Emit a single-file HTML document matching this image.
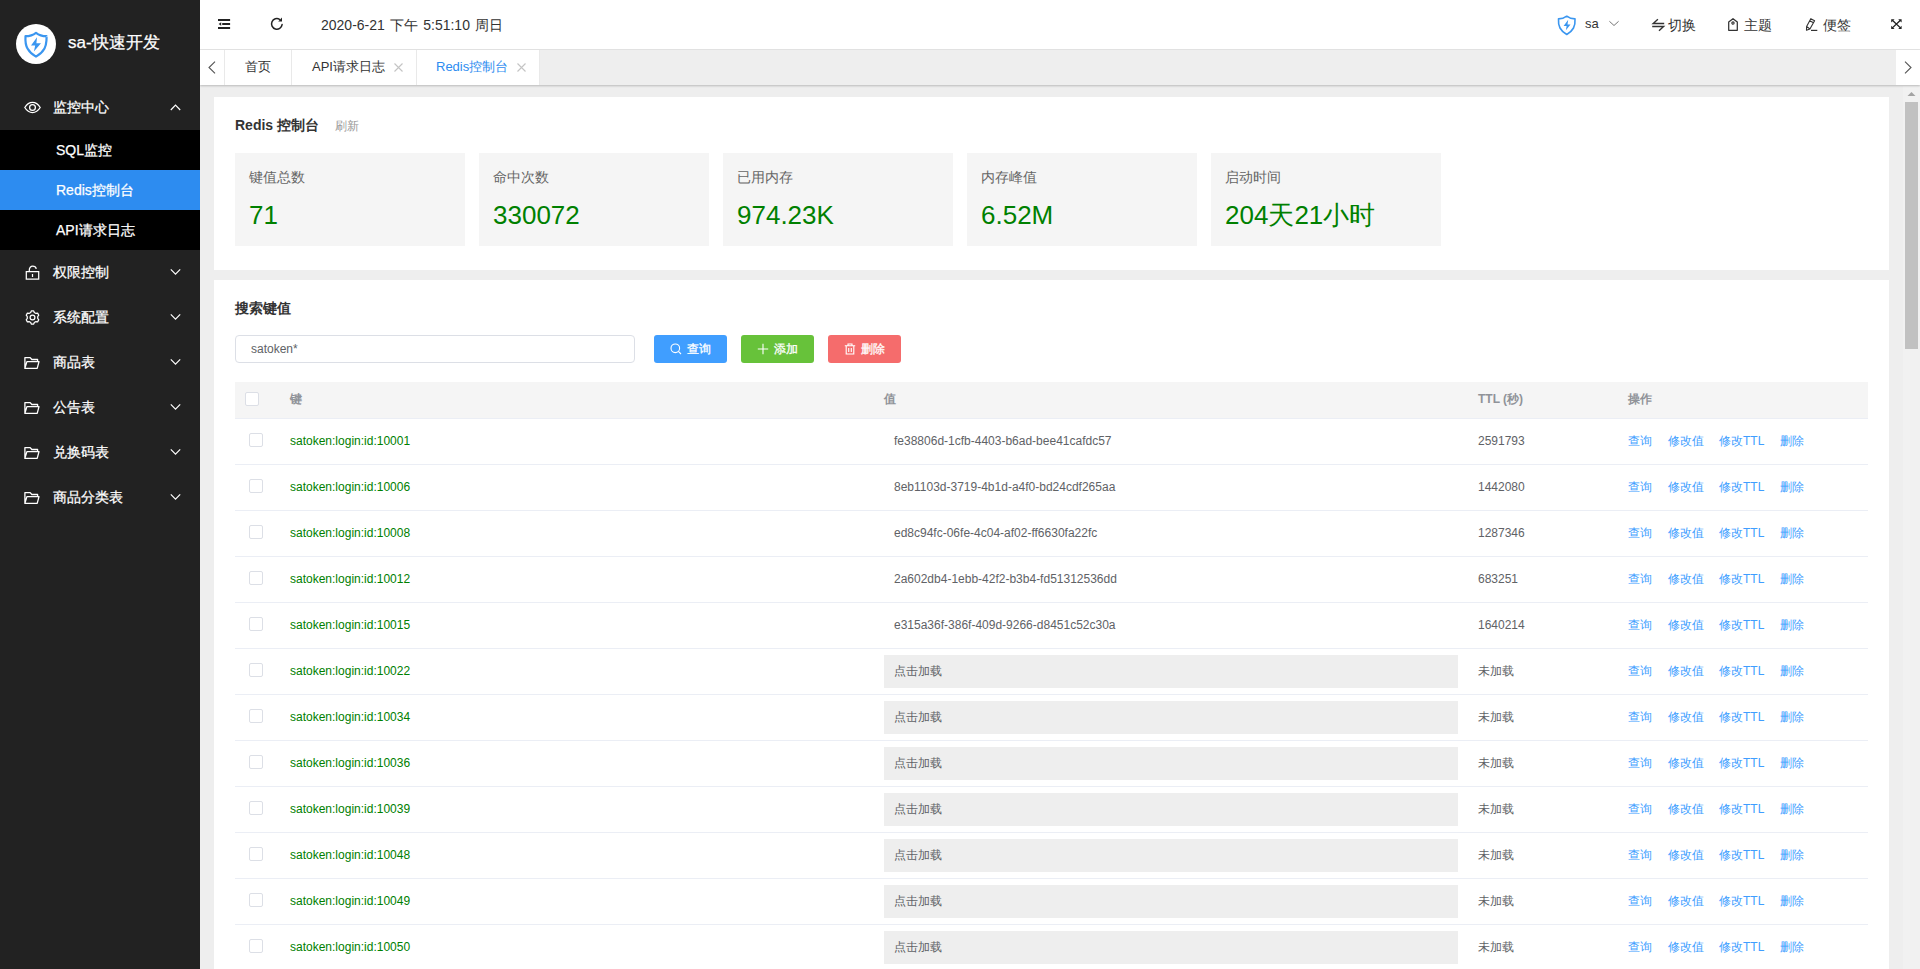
<!DOCTYPE html>
<html lang="zh"><head><meta charset="utf-8"><title>sa-快速开发</title>
<style>
*{box-sizing:border-box;margin:0;padding:0}
html,body{width:1920px;height:969px;overflow:hidden;background:#eee;font-family:"Liberation Sans",sans-serif;font-size:14px;color:#333}
#pg{position:relative;width:1920px;height:969px;overflow:hidden}
#pg *{position:absolute;white-space:nowrap}
svg{overflow:visible}
#side{left:0;top:0;width:200px;height:969px;background:#222;-webkit-text-stroke:.25px #fff}
#logo{left:16px;top:24px;width:40px;height:40px;border-radius:50%;background:#fff}
#title{left:68px;top:31px;font-size:17px;color:#fff;line-height:24px}
.mi{left:0;width:200px;height:45px;color:#fff;font-size:14px;line-height:45px}
.mi span{left:53px;top:0}
.mi svg.ic{left:24px;top:14px;width:17px;height:17px}
.mi svg.ar{left:170px;top:17px;width:11px;height:11px}
#sub{left:0;top:130px;width:200px;height:120px;background:#000}
.si{left:0;width:200px;height:40px;line-height:40px;color:#fff;font-size:14px}
.si span{left:56px;top:0}
#hdr{left:200px;top:0;width:1720px;height:50px;background:#fff;border-bottom:1px solid #e5e5e5}
#hdr .tx{font-size:14px;color:#333;line-height:20px;top:15px}
#tabs{left:200px;top:50px;width:1720px;height:35px;background:#eee;box-shadow:0 1px 2px rgba(0,0,0,.22)}
.tab{top:0;height:35px;background:#fff;border-right:1px solid #e9e9e9;font-size:13px;line-height:35px;color:#333}
#p1{left:214px;top:97px;width:1675px;height:173px;background:#fff}
#p2{left:214px;top:280px;width:1675px;height:700px;background:#fff}
.card{top:153px;width:230px;height:93px;background:#f5f5f5}
.card b{left:14px;top:14px;font-weight:normal;font-size:14px;color:#666;line-height:20px}
.card em{left:14px;top:45px;font-style:normal;font-size:26px;color:#008000;line-height:34px}
#th{left:235px;top:382px;width:1633px;height:37px;background:#f5f5f5;border-bottom:1px solid #ebeef5}
.thc{top:381px;font-size:12px;font-weight:bold;color:#909399;line-height:36px}
.cb{width:14px;height:14px;border:1px solid #dcdfe6;border-radius:2px;background:#fff}
.tr{left:0;width:1920px;height:46px;font-size:12px;color:#606266;line-height:45px}
.tr:after{content:"";position:absolute;left:235px;top:45px;width:1633px;height:1px;background:#ebeef5}
.tr .cb{left:249px;top:14px}
.tr .k{left:290px;color:#008000}
.tr .v{left:894px}
.tr .t{left:1478px}
.tr a{color:#409eff}
.tr .ld{left:884px;top:6px;width:574px;height:33px;background:#eee;line-height:33px;padding-left:10px}
.btn{top:335px;height:28px;border-radius:3px;color:#fff;font-size:12px;line-height:28px}
.tab span{top:-1px}
.btn span{-webkit-text-stroke:.3px #fff}

</style></head><body><div id="pg">
<!-- main -->
<div id="p1"></div><div id="p2"></div>
<div class="hd" style="left:235px;top:115px;font-size:14px;font-weight:bold;color:#333;line-height:20px">Redis 控制台</div>
<div style="left:335px;top:116px;font-size:12px;color:#999;line-height:20px">刷新</div>
<div class="card" style="left:235px"><b>键值总数</b><em>71</em></div>
<div class="card" style="left:479px"><b>命中次数</b><em>330072</em></div>
<div class="card" style="left:723px"><b>已用内存</b><em>974.23K</em></div>
<div class="card" style="left:967px"><b>内存峰值</b><em>6.52M</em></div>
<div class="card" style="left:1211px"><b>启动时间</b><em>204天21小时</em></div>
<div class="hd" style="left:235px;top:298px;font-size:14px;font-weight:bold;color:#333;line-height:20px">搜索键值</div>
<div id="inp" style="left:235px;top:335px;width:400px;height:28px;border:1px solid #dcdfe6;border-radius:4px;background:#fff"><span style="left:15px;top:0;font-size:12px;line-height:26px;color:#606266">satoken*</span></div>
<div class="btn" style="left:654px;width:73px;background:#409eff"><svg style="left:16px;top:8px;width:12px;height:12px" viewBox="0 0 12 12"><circle cx="5.3" cy="5.3" r="4.3" fill="none" stroke="#fff" stroke-width="1.1"/><path d="M8.4 8.4L11 11" stroke="#fff" stroke-width="1.1" fill="none"/></svg><span style="left:33px;top:0">查询</span></div>
<div class="btn" style="left:741px;width:73px;background:#67c23a"><svg style="left:16px;top:8px;width:12px;height:12px" viewBox="0 0 12 12"><path d="M6 0.8V11.2M0.8 6H11.2" stroke="#fff" stroke-width="1.1" fill="none"/></svg><span style="left:33px;top:0">添加</span></div>
<div class="btn" style="left:828px;width:73px;background:#f56c6c"><svg style="left:16px;top:8px;width:12px;height:12px" viewBox="0 0 12 12"><path d="M0.8 2.8H11.2M4 2.6V1H8V2.6M2.2 3V11H9.8V3M4.7 5V9M7.3 5V9" stroke="#fff" stroke-width="1.1" fill="none"/></svg><span style="left:33px;top:0">删除</span></div>
<div id="th"></div>
<i class="cb" style="left:245px;top:392px"></i>
<div class="thc" style="left:290px">键</div>
<div class="thc" style="left:884px">值</div>
<div class="thc" style="left:1478px">TTL (秒)</div>
<div class="thc" style="left:1628px">操作</div>
<div class="tr" style="top:419px"><i class="cb"></i><span class="k">satoken:login:id:10001</span><span class="v">fe38806d-1cfb-4403-b6ad-bee41cafdc57</span><span class="t">2591793</span><a style="left:1628px">查询</a><a style="left:1668px">修改值</a><a style="left:1719px">修改TTL</a><a style="left:1780px">删除</a></div>
<div class="tr" style="top:465px"><i class="cb"></i><span class="k">satoken:login:id:10006</span><span class="v">8eb1103d-3719-4b1d-a4f0-bd24cdf265aa</span><span class="t">1442080</span><a style="left:1628px">查询</a><a style="left:1668px">修改值</a><a style="left:1719px">修改TTL</a><a style="left:1780px">删除</a></div>
<div class="tr" style="top:511px"><i class="cb"></i><span class="k">satoken:login:id:10008</span><span class="v">ed8c94fc-06fe-4c04-af02-ff6630fa22fc</span><span class="t">1287346</span><a style="left:1628px">查询</a><a style="left:1668px">修改值</a><a style="left:1719px">修改TTL</a><a style="left:1780px">删除</a></div>
<div class="tr" style="top:557px"><i class="cb"></i><span class="k">satoken:login:id:10012</span><span class="v">2a602db4-1ebb-42f2-b3b4-fd51312536dd</span><span class="t">683251</span><a style="left:1628px">查询</a><a style="left:1668px">修改值</a><a style="left:1719px">修改TTL</a><a style="left:1780px">删除</a></div>
<div class="tr" style="top:603px"><i class="cb"></i><span class="k">satoken:login:id:10015</span><span class="v">e315a36f-386f-409d-9266-d8451c52c30a</span><span class="t">1640214</span><a style="left:1628px">查询</a><a style="left:1668px">修改值</a><a style="left:1719px">修改TTL</a><a style="left:1780px">删除</a></div>
<div class="tr" style="top:649px"><i class="cb"></i><span class="k">satoken:login:id:10022</span><span class="ld">点击加载</span><span class="t">未加载</span><a style="left:1628px">查询</a><a style="left:1668px">修改值</a><a style="left:1719px">修改TTL</a><a style="left:1780px">删除</a></div>
<div class="tr" style="top:695px"><i class="cb"></i><span class="k">satoken:login:id:10034</span><span class="ld">点击加载</span><span class="t">未加载</span><a style="left:1628px">查询</a><a style="left:1668px">修改值</a><a style="left:1719px">修改TTL</a><a style="left:1780px">删除</a></div>
<div class="tr" style="top:741px"><i class="cb"></i><span class="k">satoken:login:id:10036</span><span class="ld">点击加载</span><span class="t">未加载</span><a style="left:1628px">查询</a><a style="left:1668px">修改值</a><a style="left:1719px">修改TTL</a><a style="left:1780px">删除</a></div>
<div class="tr" style="top:787px"><i class="cb"></i><span class="k">satoken:login:id:10039</span><span class="ld">点击加载</span><span class="t">未加载</span><a style="left:1628px">查询</a><a style="left:1668px">修改值</a><a style="left:1719px">修改TTL</a><a style="left:1780px">删除</a></div>
<div class="tr" style="top:833px"><i class="cb"></i><span class="k">satoken:login:id:10048</span><span class="ld">点击加载</span><span class="t">未加载</span><a style="left:1628px">查询</a><a style="left:1668px">修改值</a><a style="left:1719px">修改TTL</a><a style="left:1780px">删除</a></div>
<div class="tr" style="top:879px"><i class="cb"></i><span class="k">satoken:login:id:10049</span><span class="ld">点击加载</span><span class="t">未加载</span><a style="left:1628px">查询</a><a style="left:1668px">修改值</a><a style="left:1719px">修改TTL</a><a style="left:1780px">删除</a></div>
<div class="tr" style="top:925px"><i class="cb"></i><span class="k">satoken:login:id:10050</span><span class="ld">点击加载</span><span class="t">未加载</span><a style="left:1628px">查询</a><a style="left:1668px">修改值</a><a style="left:1719px">修改TTL</a><a style="left:1780px">删除</a></div>
<!-- scrollbar -->
<div style="left:1903px;top:86px;width:17px;height:883px;background:#f1f1f1"></div>
<div style="left:1905px;top:102px;width:13px;height:247px;background:#c1c1c1"></div>
<svg style="left:1903px;top:86px;width:17px;height:17px" viewBox="0 0 17 17"><path d="M8.5 6L12.5 10H4.5Z" fill="#a3a3a3"/></svg>
<!-- header -->
<div id="hdr">
<svg style="left:18px;top:18px;width:13px;height:12px" viewBox="0 0 13 12"><path d="M0 1h12.1v2H0zM0 9h12.1v2H0zM4.2 5h7.9v2h-7.9zM0.6 6L3.2 4.2V7.8Z" fill="#222"/></svg>
<svg style="left:69px;top:16px;width:16px;height:16px" viewBox="0 0 16 16"><path d="M13.1 8.6A5.3 5.3 0 1 1 10.6 3.3" fill="none" stroke="#222" stroke-width="1.5" stroke-linecap="round"/><path d="M13 1.6V5.4H9.2Z" fill="#222"/></svg>
<span class="tx" style="left:121px;word-spacing:1.3px">2020-6-21 下午 5:51:10 周日</span>
<svg style="left:1357px;top:15px;width:20px;height:21px" viewBox="0 0 20 21"><path d="M9.75 1.2C7.6 2.9 4.6 3.9 1.5 3.9C1.5 3.9 1.1 9.6 3 13C4.6 15.9 7.4 18.2 9.75 19.5C12.1 18.2 14.9 15.9 16.5 13C18.4 9.6 18 3.9 18 3.9C14.9 3.9 11.9 2.9 9.75 1.2Z" fill="none" stroke="#3a96f0" stroke-width="1.6" stroke-linejoin="round"/><path d="M11.2 4.8L6.6 10.9H9.6L8.9 15.2L13.5 9.5H10.5Z" fill="#3a96f0"/></svg>
<span class="tx" style="left:1385px;top:14px;font-size:13px">sa</span>
<svg style="left:1409px;top:21px;width:10px;height:5px" viewBox="0 0 10 5"><path d="M0.4 0.3L5 4.5L9.6 0.3" fill="none" stroke="#777" stroke-width="1"/></svg>
<svg style="left:1452px;top:19px;width:13px;height:12px" viewBox="0 0 13 12"><path d="M5.9 0.3L1.2 4.5H12.2M0.2 7.5H11.6L7 11.7" fill="none" stroke="#333" stroke-width="1.4"/></svg>
<span class="tx" style="left:1468px">切换</span>
<svg style="left:1528.2px;top:18px;width:10px;height:13px" viewBox="0 0 10 13"><path d="M0.7 12.3V4.1L5 0.7L9.3 4.1V12.3Z" fill="none" stroke="#333" stroke-width="1.25" stroke-linejoin="round"/><circle cx="5" cy="5" r="1.15" fill="none" stroke="#333" stroke-width="1.1"/></svg>
<span class="tx" style="left:1544px">主题</span>
<svg style="left:1605px;top:18px;width:13px;height:13px" viewBox="0 0 13 13"><path d="M5.8 0.7L9.6 2.8L4.9 11L1.5 12.3L1.6 8.4ZM1.6 8.4L4.9 11M4.7 2.7L8.5 4.8" fill="none" stroke="#333" stroke-width="1.1" stroke-linejoin="round"/><path d="M6 12.4H12.3" stroke="#333" stroke-width="1.2"/></svg>
<span class="tx" style="left:1623px">便签</span>
<svg style="left:1690.5px;top:18.9px;width:10.8px;height:10.2px" viewBox="0 0 12 12" preserveAspectRatio="none"><path d="M1.5 1.5L10.5 10.5M10.5 1.5L1.5 10.5" stroke="#222" stroke-width="1.5" fill="none"/><path d="M0.2 0.2H4L0.2 4ZM11.8 0.2V4L8 0.2ZM0.2 11.8V8L4 11.8ZM11.8 11.8H8L11.8 8Z" fill="#222"/></svg>
</div>
<!-- tabs -->
<div id="tabs">
<div class="tab" style="left:0;width:25px"><svg style="left:7.5px;top:10.5px;width:8px;height:13px" viewBox="0 0 8 13"><path d="M7 0.6L1 6.5L7 12.4" fill="none" stroke="#555" stroke-width="1.1"/></svg></div>
<div class="tab" style="left:25px;width:67px"><span style="left:20px">首页</span></div>
<div class="tab" style="left:92px;width:125px"><span style="left:20px">API请求日志</span><svg class="x" style="left:102px;top:12.5px;width:9px;height:9px" viewBox="0 0 9 9"><path d="M0.5 0.5L8.5 8.5M8.5 0.5L0.5 8.5" stroke="#c4c4c4" stroke-width="1.1"/></svg></div>
<div class="tab" style="left:217px;width:123px;color:#2d8cf0"><span style="left:19px">Redis控制台</span><svg class="x" style="left:100px;top:12.5px;width:9px;height:9px" viewBox="0 0 9 9"><path d="M0.5 0.5L8.5 8.5M8.5 0.5L0.5 8.5" stroke="#c4c4c4" stroke-width="1.1"/></svg></div>
<div class="tab" style="left:1696px;width:24px;border-right:0"><svg style="left:8px;top:10.5px;width:8px;height:13px" viewBox="0 0 8 13"><path d="M1 0.6L7 6.5L1 12.4" fill="none" stroke="#555" stroke-width="1.1"/></svg></div>
</div>
<!-- sidebar -->
<div id="side">
<div id="logo"><svg style="left:0;top:0;width:40px;height:40px" viewBox="0 0 40 40"><path d="M20 8.8C17.5 10.8 13.5 12.2 9.5 12.2C9.5 12.2 9 20 11.5 24.5C13.5 28 17 31 20 32.6C23 31 26.5 28 28.5 24.5C31 20 30.5 12.2 30.5 12.2C26.5 12.2 22.5 10.8 20 8.8Z" fill="none" stroke="#3a96f0" stroke-width="2.2" stroke-linejoin="round"/><path d="M21 13.2L15 21.5H19.2L17.9 27.4L25 19.3H20.4Z" fill="#3a96f0"/></svg></div>
<div id="title">sa-快速开发</div>
<div class="mi" style="top:85px"><svg class="ic" viewBox="0 0 17 17"><path d="M0.8 8.5C3 4.9 5.6 3.4 8.5 3.4C11.4 3.4 14 4.9 16.2 8.5C14 12.1 11.4 13.6 8.5 13.6C5.6 13.6 3 12.1 0.8 8.5Z" fill="none" stroke="#fff" stroke-width="1.3"/><circle cx="8.5" cy="8.5" r="2.9" fill="none" stroke="#fff" stroke-width="1.3"/></svg><span>监控中心</span><svg class="ar" viewBox="0 0 11 11"><path d="M0.8 8L5.5 3.2L10.2 8" fill="none" stroke="#fff" stroke-width="1.2"/></svg></div>
<div id="sub">
<div class="si" style="top:0"><span>SQL监控</span></div>
<div class="si" style="top:40px;background:#2d8cf0"><span>Redis控制台</span></div>
<div class="si" style="top:80px"><span>API请求日志</span></div>
</div>
<div class="mi" style="top:250px"><svg class="ic" viewBox="0 0 17 17"><path d="M2.3 7.7H14.7V15H2.3ZM5.3 7.6V6C5.3 3.7 6.8 2.2 8.7 2.2C10.5 2.2 11.9 3.2 12.3 4.9M8.5 10V13" fill="none" stroke="#fff" stroke-width="1.25"/></svg><span>权限控制</span><svg class="ar" viewBox="0 0 11 11"><path d="M0.8 2.4L5.5 7.2L10.2 2.4" fill="none" stroke="#fff" stroke-width="1.2"/></svg></div>
<div class="mi" style="top:295px"><svg class="ic" viewBox="0 0 17 17"><path d="M7.31 1.91L9.69 1.91L10.30 3.51L11.92 4.45L13.62 4.18L14.80 6.23L13.72 7.56L13.72 9.44L14.80 10.77L13.62 12.82L11.92 12.55L10.30 13.49L9.69 15.09L7.31 15.09L6.70 13.49L5.08 12.55L3.38 12.82L2.20 10.77L3.28 9.44L3.28 7.56L2.20 6.23L3.38 4.18L5.08 4.45L6.70 3.51Z" fill="none" stroke="#fff" stroke-width="1.25" stroke-linejoin="round"/><circle cx="8.5" cy="8.5" r="2.4" fill="none" stroke="#fff" stroke-width="1.25"/></svg><span>系统配置</span><svg class="ar" viewBox="0 0 11 11"><path d="M0.8 2.4L5.5 7.2L10.2 2.4" fill="none" stroke="#fff" stroke-width="1.2"/></svg></div>
<div class="mi" style="top:340px"><svg class="ic" viewBox="0 0 17 17"><path d="M0.9 14.4V3.6H6.2L7.8 5.5H13.6V7.6M0.9 14.4L2.9 7.6H15L13.2 14.4Z" fill="none" stroke="#fff" stroke-width="1.3" stroke-linejoin="round"/></svg><span>商品表</span><svg class="ar" viewBox="0 0 11 11"><path d="M0.8 2.4L5.5 7.2L10.2 2.4" fill="none" stroke="#fff" stroke-width="1.2"/></svg></div>
<div class="mi" style="top:385px"><svg class="ic" viewBox="0 0 17 17"><path d="M0.9 14.4V3.6H6.2L7.8 5.5H13.6V7.6M0.9 14.4L2.9 7.6H15L13.2 14.4Z" fill="none" stroke="#fff" stroke-width="1.3" stroke-linejoin="round"/></svg><span>公告表</span><svg class="ar" viewBox="0 0 11 11"><path d="M0.8 2.4L5.5 7.2L10.2 2.4" fill="none" stroke="#fff" stroke-width="1.2"/></svg></div>
<div class="mi" style="top:430px"><svg class="ic" viewBox="0 0 17 17"><path d="M0.9 14.4V3.6H6.2L7.8 5.5H13.6V7.6M0.9 14.4L2.9 7.6H15L13.2 14.4Z" fill="none" stroke="#fff" stroke-width="1.3" stroke-linejoin="round"/></svg><span>兑换码表</span><svg class="ar" viewBox="0 0 11 11"><path d="M0.8 2.4L5.5 7.2L10.2 2.4" fill="none" stroke="#fff" stroke-width="1.2"/></svg></div>
<div class="mi" style="top:475px"><svg class="ic" viewBox="0 0 17 17"><path d="M0.9 14.4V3.6H6.2L7.8 5.5H13.6V7.6M0.9 14.4L2.9 7.6H15L13.2 14.4Z" fill="none" stroke="#fff" stroke-width="1.3" stroke-linejoin="round"/></svg><span>商品分类表</span><svg class="ar" viewBox="0 0 11 11"><path d="M0.8 2.4L5.5 7.2L10.2 2.4" fill="none" stroke="#fff" stroke-width="1.2"/></svg></div>
</div>
</div></body></html>
